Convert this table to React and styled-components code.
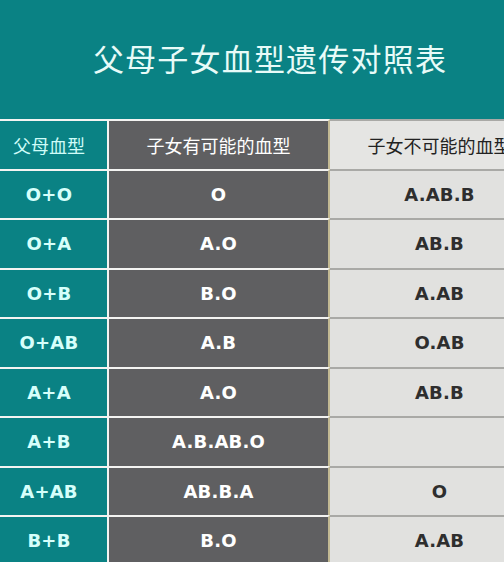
import React from "react";
import styled, { createGlobalStyle } from "styled-components";

const rows = [
  ["O+O", "O", "A.AB.B"],
  ["O+A", "A.O", "AB.B"],
  ["O+B", "B.O", "A.AB"],
  ["O+AB", "A.B", "O.AB"],
  ["A+A", "A.O", "AB.B"],
  ["A+B", "A.B.AB.O", ""],
  ["A+AB", "AB.B.A", "O"],
  ["B+B", "B.O", "A.AB"],
];

function App() {
  return (
    <>
      <GlobalStyle />
      <Page>
        <TitleBar>父母子女血型遗传对照表</TitleBar>
        <Table>
          <HeadCell kind="parent">父母血型</HeadCell>
          <HeadCell kind="possible">子女有可能的血型</HeadCell>
          <HeadCell kind="impossible">子女不可能的血型</HeadCell>
          {rows.map((row, index) => (
            <React.Fragment key={index}>
              <Cell kind="parent">{row[0]}</Cell>
              <Cell kind="possible">{row[1]}</Cell>
              <Cell kind="impossible">{row[2]}</Cell>
            </React.Fragment>
          ))}
        </Table>
      </Page>
    </>
  );
}

const GlobalStyle = createGlobalStyle`
  html, body {
    margin: 0;
    padding: 0;
    overflow: hidden;
    background: #e1e1df;
  }
`;

const colors = {
  parent: { bg: "#0a8284", fg: "#d6fffb", line: "#f4f4f2" },
  possible: { bg: "#5f5f61", fg: "#ffffff", line: "#f4f4f2" },
  impossible: { bg: "#e1e1df", fg: "#2e2e2e", line: "#a9a9a6" },
};

const Page = styled.div`
  width: 558px;
  margin-left: -9px;
  display: flex;
  flex-direction: column;
`;

const TitleBar = styled.div`
  height: 119px;
  display: flex;
  align-items: center;
  justify-content: center;
  padding-bottom: 4px;
  box-sizing: border-box;
  background-color: #0a8284;
  color: #e8fbf8;
  font-family: "Noto Sans CJK SC", sans-serif;
  font-size: 31px;
  font-weight: 400;
  letter-spacing: 1.2px;
`;

const Table = styled.div`
  display: grid;
  grid-template-columns: 118px 221px 219px;
  grid-auto-rows: 49.5px;
`;

const BaseCell = styled.div`
  display: flex;
  align-items: center;
  justify-content: center;
  box-sizing: border-box;
  background-color: ${(p) => colors[p.kind].bg};
  color: ${(p) => colors[p.kind].fg};
  border-top: 2px solid ${(p) => colors[p.kind].line};
  border-right: ${(p) =>
    p.kind === "parent"
      ? "2px solid #f4f4f2"
      : p.kind === "possible"
      ? "2px solid #c2b993"
      : "none"};
`;

const HeadCell = styled(BaseCell)`
  font-family: "Noto Sans CJK SC", sans-serif;
  font-size: 18px;
  color: ${(p) =>
    p.kind === "parent" ? "#cffcf8" : p.kind === "possible" ? "#ffffff" : "#222222"};
  background-color: ${(p) => (p.kind === "impossible" ? "#e5e5e3" : colors[p.kind].bg)};
  white-space: nowrap;
`;

const Cell = styled(BaseCell)`
  font-family: "DejaVu Sans", "Liberation Sans", sans-serif;
  font-weight: bold;
  font-size: 18px;
  letter-spacing: 0.2px;
`;

export default App;
